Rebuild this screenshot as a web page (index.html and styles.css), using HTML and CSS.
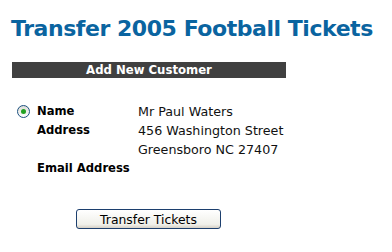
FILE: index.html
```html
<!DOCTYPE html>
<html lang="en">
<head>
    <meta charset="UTF-8">
    <title>Transfer Tickets</title>
    <link rel="stylesheet" href="styles.css">
</head>
<body>
    <h1 class="title">Transfer 2005 Football Tickets</h1>

    <div class="panel">
        <div class="panel-head">Add New Customer</div>

        <div class="customer">
            <span class="radio"><span class="radio-dot"></span></span>
            <div class="fields">
                <div class="label">Name</div>
                <div class="value">Mr Paul Waters</div>
                <div class="label">Address</div>
                <div class="value">456 Washington Street<br>Greensboro NC 27407</div>
                <div class="label">Email Address</div>
                <div class="value"></div>
            </div>
        </div>

        <div class="actions">
            <button class="btn" type="button">Transfer Tickets</button>
        </div>
    </div>
</body>
</html>
```

FILE: styles.css
```css
body {
    margin: 0;
    padding: 0;
    background-color: #fff;
    font-family: "DejaVu Sans", Verdana, sans-serif;
    font-size: 12px;
    color: #000;
}

.title {
    margin: 0;
    padding: 15px 0 0 11px;
    font-size: 22px;
    line-height: 28px;
    letter-spacing: -0.45px;
    color: #0a64a0;
}

.panel {
    width: 274px;
    margin: 19px 0 0 12px;
}

.panel-head {
    background-color: #404040;
    color: #fff;
    font-weight: bold;
    font-size: 11.7px;
    line-height: 16px;
    text-align: center;
}

.customer {
    display: flex;
    margin-top: 24px;
}

.radio {
    width: 11px;
    height: 11px;
    margin: 3px 0 0 5px;
    border: 1px solid #1c5180;
    border-radius: 50%;
    background: linear-gradient(#dcdcd6, #fff);
    display: flex;
    align-items: center;
    justify-content: center;
    flex: none;
}

.radio-dot {
    width: 5px;
    height: 5px;
    border-radius: 50%;
    background-color: #21a121;
}

.fields {
    display: grid;
    grid-template-columns: 101px auto;
    margin-left: 7px;
    line-height: 19px;
}

.label {
    font-weight: bold;
    font-size: 11.6px;
}

.value {
    font-size: 12.7px;
    color: #111;
}

.actions {
    margin: 31px 0 0 64px;
}

.btn {
    width: 145px;
    height: 20px;
    padding: 0;
    border: 1px solid #1c3f6e;
    border-radius: 3px;
    background: linear-gradient(#ffffff, #f0f0ea 80%, #d6d0c5);
    font-family: "DejaVu Sans", Verdana, sans-serif;
    font-size: 12.4px;
    color: #000;
}
```
